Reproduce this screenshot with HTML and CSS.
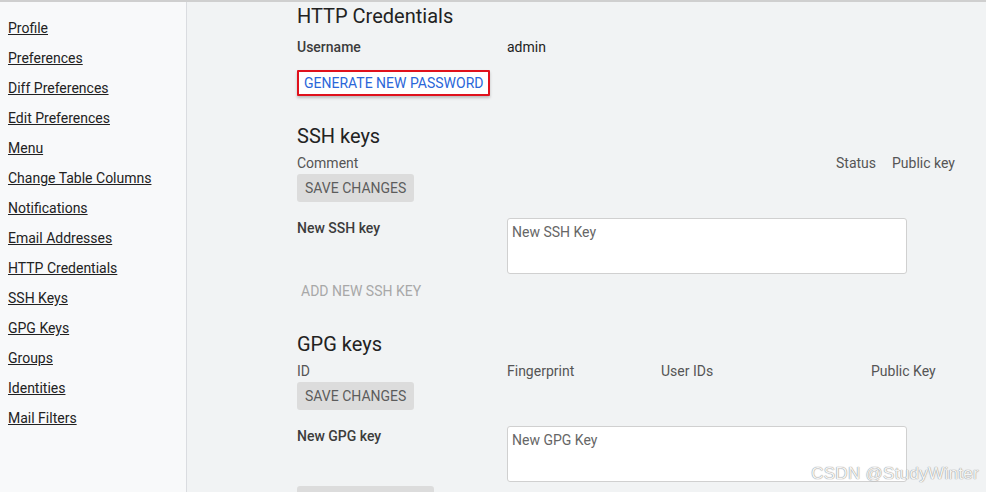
FILE: index.html
```html
<!DOCTYPE html>
<html>
<head>
<meta charset="utf-8">
<link rel="stylesheet" href="styles.css">
</head>
<body>
<div class="page">
  <nav class="sidebar">
    <a href="#">Profile</a>
    <a href="#">Preferences</a>
    <a href="#">Diff Preferences</a>
    <a href="#">Edit Preferences</a>
    <a href="#">Menu</a>
    <a href="#">Change Table Columns</a>
    <a href="#">Notifications</a>
    <a href="#">Email Addresses</a>
    <a href="#">HTTP Credentials</a>
    <a href="#">SSH Keys</a>
    <a href="#">GPG Keys</a>
    <a href="#">Groups</a>
    <a href="#">Identities</a>
    <a href="#">Mail Filters</a>
  </nav>
  <main class="main">
    <section class="section http">
      <h2>HTTP Credentials</h2>
      <div class="kv">
        <span class="label">Username</span>
        <span class="value">admin</span>
      </div>
      <button class="btn-raised">GENERATE NEW PASSWORD</button>
    </section>

    <section class="section ssh">
      <h2>SSH keys</h2>
      <div class="thead ssh-cols">
        <span>Comment</span>
        <span>Status</span>
        <span>Public key</span>
      </div>
      <button class="btn-gray">SAVE CHANGES</button>
      <div class="newkey">
        <span class="label">New SSH key</span>
        <textarea placeholder="New SSH Key"></textarea>
      </div>
      <button class="btn-text">ADD NEW SSH KEY</button>
    </section>

    <section class="section gpg">
      <h2>GPG keys</h2>
      <div class="thead gpg-cols">
        <span>ID</span>
        <span>Fingerprint</span>
        <span>User IDs</span>
        <span>Public Key</span>
      </div>
      <button class="btn-gray">SAVE CHANGES</button>
      <div class="newkey">
        <span class="label">New GPG key</span>
        <textarea placeholder="New GPG Key"></textarea>
      </div>
      <button class="btn-gray btn-wide">ADD NEW GPG KEY</button>
    </section>
  </main>
</div>
<div class="watermark">CSDN @StudyWinter</div>
</body>
</html>
```

FILE: styles.css
```css
html, body {
  margin: 0;
  padding: 0;
  height: 100%;
  overflow: hidden;
}
body {
  font-family: Roboto, "Liberation Sans", sans-serif;
  font-size: 14px;
  color: #333;
  background: #f1f3f4;
}
.page {
  display: flex;
  height: 100%;
  border-top: 2px solid #cfcfcf;
  box-sizing: border-box;
}
.sidebar {
  width: 187px;
  flex: none;
  background: #f8f9fa;
  border-right: 1px solid #dadce0;
  display: flex;
  flex-direction: column;
  align-items: flex-start;
  gap: 10px;
  padding: 16px 0 0 8px;
  box-sizing: border-box;
}
.sidebar a {
  color: #222;
  text-decoration: underline;
  line-height: 20px;
  font-size: 14px;
}
.main {
  flex: 1;
  padding: 0 0 0 110px;
  display: flex;
  flex-direction: column;
}
.section {
  display: flex;
  flex-direction: column;
  align-items: flex-start;
}
h2 {
  margin: 0;
  font-size: 20px;
  font-weight: 400;
  line-height: 28px;
  color: #222;
}
.label {
  font-weight: 500;
  color: #3c3c3c;
}
.kv {
  display: grid;
  grid-template-columns: 210px auto;
  line-height: 20px;
  margin-top: 7px;
}
.value {
  color: #222;
}
button {
  font-family: Roboto, "Liberation Sans", sans-serif;
  font-size: 14px;
  border: none;
  cursor: pointer;
  white-space: nowrap;
}
.btn-raised {
  margin-top: 13px;
  height: 26px;
  padding: 0 5px;
  background: #fff;
  color: #2a66d9;
  border: 2px solid #e0111c;
  border-radius: 1px;
  box-shadow: 0 2px 3px rgba(0,0,0,0.22);
  line-height: 22px;
}
.ssh {
  margin-top: 26px;
}
.thead {
  display: grid;
  line-height: 20px;
  margin-top: 3px;
  color: #555;
  width: 100%;
}
.ssh-cols {
  grid-template-columns: 539px 56px auto;
}
.gpg-cols {
  grid-template-columns: 210px 154px 210px auto;
}
.btn-gray {
  margin-top: 1px;
  height: 28px;
  padding: 0 8px;
  background: #dcdcdc;
  color: #5c5c5c;
  border-radius: 3px;
}
.btn-wide {
  margin-top: 4px;
  padding: 0 8px;
}
.newkey {
  display: grid;
  grid-template-columns: 210px auto;
  margin-top: 16px;
}
.newkey .label {
  line-height: 20px;
}
textarea {
  width: 400px;
  height: 56px;
  box-sizing: border-box;
  border: 1px solid #d0d0d0;
  border-radius: 3px;
  background: #fff;
  font-family: Roboto, "Liberation Sans", sans-serif;
  font-size: 14px;
  padding: 5px 4px;
  resize: none;
  color: #333;
}
textarea::placeholder {
  color: #666;
}
.btn-text {
  margin-top: 3px;
  height: 28px;
  padding: 0 4px;
  background: transparent;
  color: #a8a8a8;
}
.gpg {
  margin-top: 25px;
}
.watermark {
  position: absolute;
  right: 7px;
  bottom: 8px;
  font-family: "Liberation Sans", Arial, sans-serif;
  font-size: 17px;
  color: #f4f4f4;
  text-shadow: 0 0 1px #888, 0 0 1px #aaa;
  letter-spacing: 0.3px;
}
```
